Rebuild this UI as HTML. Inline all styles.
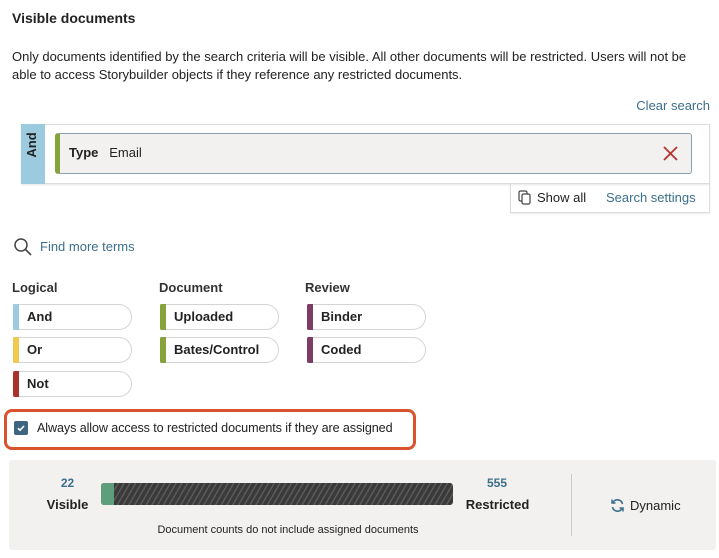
<!DOCTYPE html>
<html><head><style>
*{box-sizing:border-box;margin:0;padding:0}
body{width:719px;height:558px;background:#fff;font-family:"Liberation Sans",sans-serif;color:#222;position:relative;overflow:hidden}
.a{position:absolute}
.link{color:#3b6f8c;font-size:13px}
.hdr{font-size:13px;font-weight:bold;color:#333}
.pill{position:absolute;width:119px;height:26px;border:1px solid #d4d4d4;border-radius:0 13px 13px 0;font-size:13px;font-weight:bold;padding-left:14px;line-height:24px;color:#222;border-left:none}
.pill:before{content:"";position:absolute;left:0;top:-1px;bottom:-1px;width:6px;background:var(--c);border-radius:2px 0 0 2px}
</style></head><body>
<div class="a" style="left:12px;top:10px;font-size:14px;font-weight:bold;color:#222">Visible documents</div>
<div class="a" style="left:12px;top:48px;width:700px;font-size:13px;line-height:18px;color:#222">Only documents identified by the search criteria will be visible. All other documents will be restricted. Users will not be able to access Storybuilder objects if they reference any restricted documents.</div>
<div class="a link" style="right:9px;top:98px">Clear search</div>
<div class="a" style="left:21px;top:124px;width:689px;height:60px;border:1px solid #ddd;box-shadow:0 1px 2px rgba(0,0,0,.1)"></div>
<div class="a" style="left:21px;top:124px;width:24px;height:60px;background:#9ccbe0"></div>
<div class="a" style="left:24px;top:165px;transform:rotate(-90deg);transform-origin:0 0;font-size:13px;font-weight:bold;width:40px;text-align:center;color:#222">And</div>
<div class="a" style="left:55px;top:133px;width:637px;height:41px;background:#f2f1f0;border:1px solid #8ba0ad;border-left:5px solid #86a33b;border-radius:3px"></div>
<div class="a" style="left:69px;top:145px;font-size:13px"><b>Type</b>&nbsp;&nbsp; Email</div>
<svg class="a" style="left:663px;top:146px" width="15" height="15" viewBox="0 0 15 15"><path d="M1 1L14 14M14 1L1 14" stroke="#b8332b" stroke-width="1.8"/></svg>
<div class="a" style="left:510px;top:183px;width:200px;height:30px;border:1px solid #ddd;border-top:none;box-shadow:0 1px 2px rgba(0,0,0,.08)"></div>
<svg class="a" style="left:518px;top:190px" width="13" height="15" viewBox="0 0 13 15"><rect x="1" y="1" width="8" height="10" rx="1.5" fill="none" stroke="#444" stroke-width="1.2"/><rect x="4" y="4" width="8" height="10" rx="1.5" fill="#fff" stroke="#444" stroke-width="1.2"/></svg>
<div class="a" style="left:537px;top:190px;font-size:13px;color:#222">Show all</div>
<div class="a link" style="left:606px;top:190px">Search settings</div>
<svg class="a" style="left:13px;top:237px" width="20" height="20" viewBox="0 0 20 20"><circle cx="8" cy="8" r="6" fill="none" stroke="#444" stroke-width="1.5"/><path d="M12.5 12.5L18 18" stroke="#444" stroke-width="1.6"/></svg>
<div class="a link" style="left:40px;top:239px">Find more terms</div>
<div class="a hdr" style="left:12px;top:280px">Logical</div>
<div class="a hdr" style="left:159px;top:280px">Document</div>
<div class="a hdr" style="left:305px;top:280px">Review</div>
<div class="pill" style="left:13px;top:304px;--c:#9ccbe0">And</div>
<div class="pill" style="left:13px;top:337px;--c:#f0c94f">Or</div>
<div class="pill" style="left:13px;top:371px;--c:#a8312b">Not</div>
<div class="pill" style="left:160px;top:304px;--c:#86a33b">Uploaded</div>
<div class="pill" style="left:160px;top:337px;--c:#86a33b">Bates/Control</div>
<div class="pill" style="left:307px;top:304px;--c:#7c3c63">Binder</div>
<div class="pill" style="left:307px;top:337px;--c:#7c3c63">Coded</div>
<div class="a" style="left:4px;top:409px;width:412px;height:41px;border:3px solid #d9532f;border-radius:8px"></div>
<div class="a" style="left:14px;top:421px;width:14px;height:14px;background:#3d6680;border-radius:2px"></div>
<svg class="a" style="left:14px;top:421px" width="14" height="14" viewBox="0 0 14 14"><path d="M4 7.2L6 9.2L10 5" stroke="#fff" stroke-width="1.6" fill="none"/></svg>
<div class="a" style="left:37px;top:421px;font-size:12.6px;letter-spacing:-0.1px;color:#222">Always allow access to restricted documents if they are assigned</div>
<div class="a" style="left:9px;top:460px;width:707px;height:90px;background:#f2f1f0;border-radius:3px"></div>
<div class="a" style="left:40px;top:476px;width:55px;text-align:center;font-size:12px;font-weight:bold;color:#3b6f8c">22</div>
<div class="a" style="left:40px;top:497px;width:55px;text-align:center;font-size:13px;font-weight:bold">Visible</div>
<div class="a" style="left:101px;top:483px;width:352px;height:22px;border-radius:3px;background:repeating-linear-gradient(-60deg,#5a5a5a 0 1.5px,#3a3a3a 1.5px 5px);overflow:hidden"><div style="width:13px;height:22px;background:#5e9e7c"></div></div>
<div class="a" style="left:467px;top:476px;width:60px;text-align:center;font-size:12px;font-weight:bold;color:#3b6f8c">555</div>
<div class="a" style="left:460px;top:497px;width:75px;text-align:center;font-size:13px;font-weight:bold">Restricted</div>
<div class="a" style="left:571px;top:474px;width:1px;height:62px;background:#ccc"></div>
<svg class="a" style="left:610px;top:498px" width="15" height="15" viewBox="0 0 15 15"><path d="M12.5 6A5.2 5.2 0 0 0 3 4.3M2.5 9A5.2 5.2 0 0 0 12 10.7" stroke="#3b6f8c" stroke-width="1.6" fill="none"/><path d="M2 1.5V5H5.5M13 13.5V10H9.5" stroke="#3b6f8c" stroke-width="1.5" fill="none"/></svg>
<div class="a" style="left:630px;top:498px;font-size:13px">Dynamic</div>
<div class="a" style="left:100px;top:524px;width:376px;text-align:center;font-size:11px">Document counts do not include assigned documents</div>
</body></html>
